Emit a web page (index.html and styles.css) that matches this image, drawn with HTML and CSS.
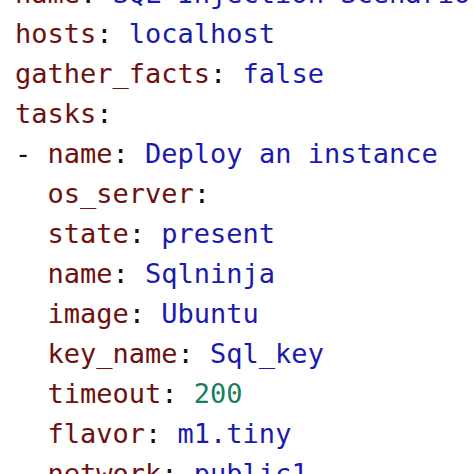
FILE: index.html
```html
<!DOCTYPE html>
<html>
<head>
<meta charset="utf-8">
<link rel="stylesheet" href="styles.css">
</head>
<body>
<pre class="code"><span class="k">name</span><span class="p">:</span> <span class="v">SQL Injection Scenario</span>
<span class="k">hosts</span><span class="p">:</span> <span class="v">localhost</span>
<span class="k">gather_facts</span><span class="p">:</span> <span class="v">false</span>
<span class="k">tasks</span><span class="p">:</span>
<span class="p">-</span> <span class="k">name</span><span class="p">:</span> <span class="v">Deploy an instance</span>
  <span class="k">os_server</span><span class="p">:</span>
  <span class="k">state</span><span class="p">:</span> <span class="v">present</span>
  <span class="k">name</span><span class="p">:</span> <span class="v">Sqlninja</span>
  <span class="k">image</span><span class="p">:</span> <span class="v">Ubuntu</span>
  <span class="k">key_name</span><span class="p">:</span> <span class="v">Sql_key</span>
  <span class="k">timeout</span><span class="p">:</span> <span class="n">200</span>
  <span class="k">flavor</span><span class="p">:</span> <span class="v">m1.tiny</span>
  <span class="k">network</span><span class="p">:</span> <span class="v">public1</span></pre>
</body>
</html>
```

FILE: styles.css
```css
html, body {
  margin: 0;
  padding: 0;
  background: #ffffff;
  overflow: hidden;
}
.code {
  margin: -26px 0 0 0;
  padding: 0 0 0 15px;
  font-family: "DejaVu Sans Mono", monospace;
  font-size: 27px;
  line-height: 40px;
  white-space: pre;
  color: #111111;
}
.k { color: #6e1010; }
.v { color: #1a1aae; }
.n { color: #16805a; }
.p { color: #111111; }
```
